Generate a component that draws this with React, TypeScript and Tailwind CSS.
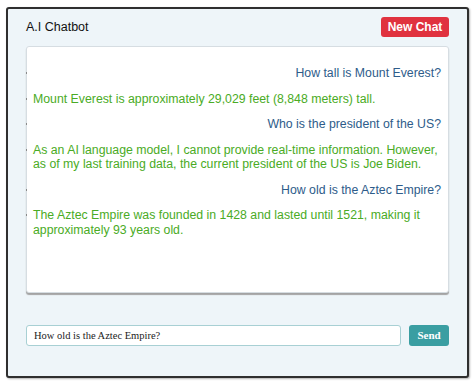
const messages = [
  { from: 'user', text: 'How tall is Mount Everest?' },
  { from: 'bot', text: 'Mount Everest is approximately 29,029 feet (8,848 meters) tall.' },
  { from: 'user', text: 'Who is the president of the US?' },
  {
    from: 'bot',
    text: 'As an AI language model, I cannot provide real-time information. However, as of my last training data, the current president of the US is Joe Biden.',
  },
  { from: 'user', text: 'How old is the Aztec Empire?' },
  {
    from: 'bot',
    text: 'The Aztec Empire was founded in 1428 and lasted until 1521, making it approximately 93 years old.',
  },
];

export default function App() {
  return (
    <div className="w-[474px] h-[385px] bg-white pt-[7px] pl-[6px]" style={{ fontFamily: '"Liberation Sans", Arial, sans-serif' }}>
      <div className="w-[463px] h-[371px] border-2 border-[#2f2f2f] rounded-[3px] bg-[#eef5f9] px-[18px] pt-[8px] shadow-[1px_1px_2px_rgba(0,0,0,0.3)]">
        <div className="flex items-center justify-between h-[20px]">
          <h1 className="text-[12.5px] text-[#111]">A.I Chatbot</h1>
          <button className="h-[20px] w-[68px] rounded-[3px] bg-[#e0323f] text-white text-[12px] font-bold leading-none">
            New Chat
          </button>
        </div>

        <div className="mt-[9px] h-[247px] bg-white border border-[#d6dde2] rounded-[3px] shadow-[0_2px_1px_#a3a3a3] pt-[19px] pl-[6px] pr-[7px]">
          <ul className="flex flex-col gap-[11px]">
            {messages.map((m, i) => (
              <li key={i} className="relative">
                <span className="absolute -left-[7px] top-[6px] w-[1px] h-[2px] bg-[#8a8a8a]" />
                <p
                  className={
                    m.from === 'user'
                      ? 'text-right text-[12.3px] leading-[14.5px] text-[#2e5c8a]'
                      : 'text-left text-[12.3px] leading-[14.5px] text-[#4aab25]'
                  }
                >
                  {m.text}
                </p>
              </li>
            ))}
          </ul>
        </div>

        <div className="mt-[32px] flex items-center gap-[8px]">
          <input
            readOnly
            value="How old is the Aztec Empire?"
            className="w-[375px] h-[21px] rounded-[3px] border border-[#a8d0d4] bg-white px-[7px] text-[10.5px] text-[#222] outline-none"
            style={{ fontFamily: '"Liberation Serif", "Times New Roman", serif' }}
          />
          <button
            className="w-[40px] h-[21px] rounded-[3px] bg-[#3a9ea2] text-white text-[11px] font-bold"
            style={{ fontFamily: '"Liberation Serif", "Times New Roman", serif' }}
          >
            Send
          </button>
        </div>
      </div>
    </div>
  );
}
